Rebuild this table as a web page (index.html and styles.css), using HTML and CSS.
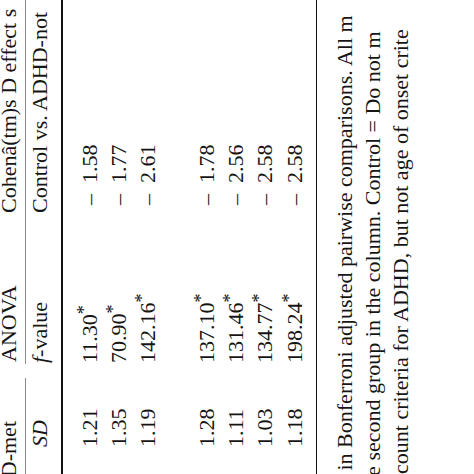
FILE: index.html
```html
<!DOCTYPE html>
<html>
<head>
<meta charset="utf-8">
<link rel="stylesheet" href="styles.css">
</head>
<body>
<div class="page">
  <div class="table">
    <div class="head">
      <div class="row r1">
        <div class="cell adhd"><span>ADHD-met</span></div>
        <div class="cell anova">ANOVA</div>
        <div class="cell cohen">Cohenâ(tm)s D effect s</div>
      </div>
      <div class="row r2">
        <div class="cell sd"><i>SD</i></div>
        <div class="cell fv"><i>f</i>-value</div>
        <div class="cell dv">Control vs. ADHD-not</div>
      </div>
    </div>
    <div class="body">
      <div class="row"><div class="cell sd">1.21</div><div class="cell fv">11.30<sup>*</sup></div><div class="cell dv2"><span class="minus">–</span>1.58</div></div>
      <div class="row"><div class="cell sd">1.35</div><div class="cell fv">70.90<sup>*</sup></div><div class="cell dv2"><span class="minus">–</span>1.77</div></div>
      <div class="row"><div class="cell sd">1.19</div><div class="cell fv">142.16<sup>*</sup></div><div class="cell dv2"><span class="minus">–</span>2.61</div></div>
      <div class="row"><div class="cell sd"></div><div class="cell fv"></div><div class="cell dv2"></div></div>
      <div class="row"><div class="cell sd">1.28</div><div class="cell fv">137.10<sup>*</sup></div><div class="cell dv2"><span class="minus">–</span>1.78</div></div>
      <div class="row"><div class="cell sd">1.11</div><div class="cell fv">131.46<sup>*</sup></div><div class="cell dv2"><span class="minus">–</span>2.56</div></div>
      <div class="row"><div class="cell sd">1.03</div><div class="cell fv">134.77<sup>*</sup></div><div class="cell dv2"><span class="minus">–</span>2.58</div></div>
      <div class="row"><div class="cell sd">1.18</div><div class="cell fv">198.24<sup>*</sup></div><div class="cell dv2"><span class="minus">–</span>2.58</div></div>
    </div>
  </div>
  <div class="note">
    <div class="nl l1">in Bonferroni adjusted pairwise comparisons. All m</div>
    <div class="nl l2">the second group in the column. Control = Do not m</div>
    <div class="nl l3">count criteria for ADHD, but not age of onset crite</div>
  </div>
</div>
</body>
</html>
```

FILE: styles.css
```css
html, body {
  margin: 0;
  padding: 0;
  background: #ffffff;
}
body {
  width: 474px;
  height: 474px;
  overflow: hidden;
}
.page {
  width: 474px;
  height: 474px;
  overflow: hidden;
  transform: rotate(-90deg);
  font-family: "Liberation Serif", "Times New Roman", serif;
  font-size: 22px;
  color: #151515;
  background: #ffffff;
}
.table {
  margin-top: -4px;
}
.row {
  display: grid;
  grid-template-columns: 110px 151px 300px;
  white-space: nowrap;
}
.r1 .cell {
  line-height: 25px;
  padding-bottom: 4px;
  border-bottom: 1px solid #8a8a8a;
}
.r1 .adhd {
  display: flex;
  justify-content: flex-end;
  padding-right: 43px;
  margin-right: 14px;
}
.r1 .anova {
  padding-left: 2px;
}
.r2 {
  border-bottom: 2px solid #111111;
}
.r2 .cell {
  padding-top: 1px;
  line-height: 25px;
  padding-bottom: 9px;
}
.sd {
  padding-left: 27px;
}
.fv {
  padding-left: 1px;
}
.body {
  padding-top: 11.6px;
  padding-bottom: 7px;
  border-bottom: 1.5px solid #111111;
}
.body .row {
  height: 29.3px;
  line-height: 29.3px;
}
.dv2 {
  padding-left: 8px;
}
.minus {
  margin-right: 11px;
}
sup {
  font-size: 18px;
  line-height: 0;
  vertical-align: 7px;
}
.note {
  padding-top: 14px;
}
.nl {
  line-height: 28px;
  white-space: nowrap;
}
.l1 {
  padding-left: 3.5px;
}
.l2 {
  margin-left: -19px;
}
```
